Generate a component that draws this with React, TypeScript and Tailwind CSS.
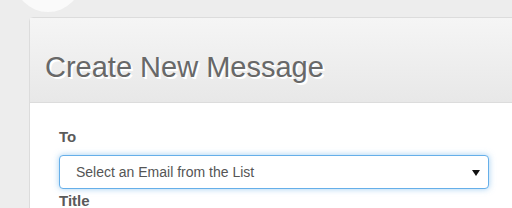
export default function App() {
  return (
    <div
      className="relative h-[208px] w-[512px] overflow-hidden bg-[#ededed]"
      style={{ fontFamily: '"Liberation Sans", Arial, sans-serif' }}
    >
      {/* avatar circle peeking from the top */}
      <div className="absolute left-[14px] top-[-56px] h-[68px] w-[68px] rounded-full bg-[#fafafa]" />

      <div className="ml-[29px] mt-[17px] w-[520px] rounded-tl-[4px] border border-[#dcdcdc] bg-white">
        <div className="h-[85px] border-b border-[#dcdcdc] bg-gradient-to-b from-[#f5f5f5] to-[#e8e8e8] px-[15px] pt-[33px]">
          <h1 className="text-[29px] leading-[32px] text-[#686868] [text-shadow:1px_1px_0_#fff,2px_2px_0_#fff]">
            Create New Message
          </h1>
        </div>
        <div className="px-[29px] pt-[24px]">
          <label className="block text-[15px] font-bold leading-[20px] text-[#5a5a5a]">To</label>
          <div className="mt-[8px] flex h-[34px] w-[430px] items-center justify-between rounded-[4px] border border-[#66afe9] bg-white pl-[16px] pr-[8px] shadow-[0_0_6px_rgba(102,175,233,0.6)]">
            <span className="text-[14px] text-[#555]">Select an Email from the List</span>
            <svg width="8" height="6" viewBox="0 0 8 6" className="mt-[2px]">
              <path d="M0 0H8L4 6Z" fill="#111" />
            </svg>
          </div>
          <label className="mt-[2px] block text-[15px] font-bold leading-[20px] text-[#5a5a5a]">Title</label>
        </div>
      </div>
    </div>
  );
}
